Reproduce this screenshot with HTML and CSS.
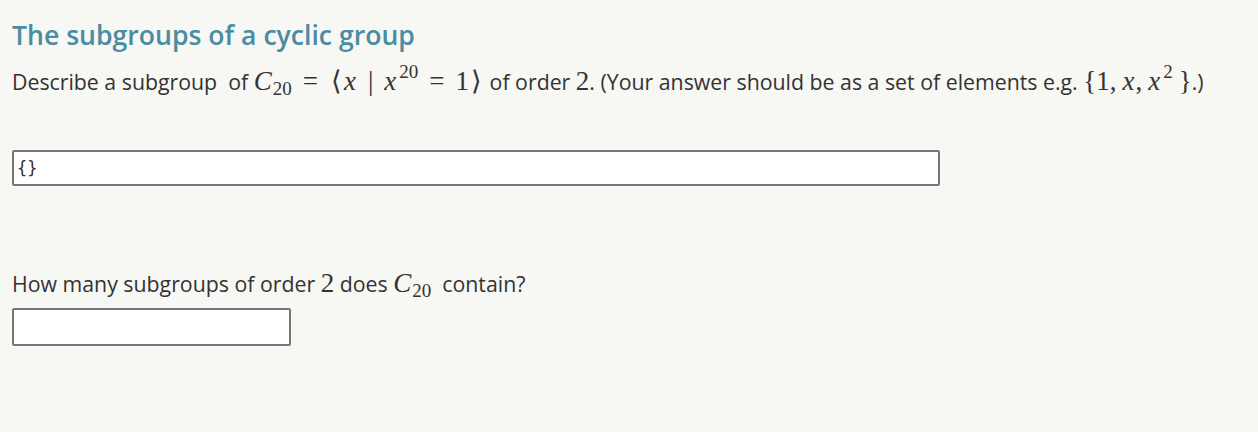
FILE: index.html
```html
<!DOCTYPE html>
<html>
<head>
<meta charset="utf-8">
<link rel="stylesheet" href="styles.css">
</head>
<body>
<div class="page">
  <h1 class="title">The subgroups of a cyclic group</h1>
  <p class="statement">Describe a subgroup&nbsp; of <span class="m"><i>C</i><sub>20</sub><span class="rel">=</span><span class="br">⟨</span><i>x</i><span class="rel">|</span><i>x</i><sup>20</sup><span class="rel">=</span>1<span class="br">⟩</span></span> of order <span class="m">2</span>. (Your answer should be as a set of elements e.g. <span class="m">{1,<span class="sp"></span><i>x</i>,<span class="sp"></span><i>x</i><sup>2</sup><span class="sp"></span>}</span>.)</p>
  <div class="answer wide"><span class="val">{}</span></div>
  <p class="statement q2">How many subgroups of order <span class="m">2</span> does <span class="m"><i>C</i><sub>20</sub></span>&nbsp; contain?</p>
  <div class="answer narrow"></div>
</div>
</body>
</html>
```
FILE: styles.css
```css
html, body {
  margin: 0;
  background: #f7f7f3;
}
.page {
  padding: 17px 12px;
  font-family: "Open Sans", sans-serif;
  color: #333;
}
.title {
  margin: 0;
  font-size: 26.6px;
  font-weight: 600;
  color: #4a8ca3;
  line-height: 36px;
}
.statement {
  margin: 11px 0 0;
  font-size: 21.3px;
  line-height: 36px;
}
.m {
  font-family: "Liberation Serif", serif;
  font-size: 27px;
  line-height: 0;
}
.m i { padding-right: 1px; }
.m sub, .m sup {
  font-size: 19px;
}
.m sub { vertical-align: -5px; line-height: 0; }
.m sup { vertical-align: 12px; line-height: 0; padding-left: 2px; }
.rel { margin: 0 11px; }
.br { margin: 0 2px; }
.sp { display: inline-block; width: 6px; }
.answer {
  background: #fff;
  border: 2px solid #777;
  border-radius: 2px;
  box-sizing: border-box;
  height: 36px;
}
.wide {
  margin-top: 50px;
  width: 928px;
  padding: 4px 3px;
}
.val {
  font-family: "DejaVu Sans Mono", monospace;
  font-size: 17px;
  color: #333;
  line-height: 24px;
}
.q2 { margin-top: 80px; }
.narrow {
  margin-top: 6px;
  width: 279px;
  height: 38px;
}
```
